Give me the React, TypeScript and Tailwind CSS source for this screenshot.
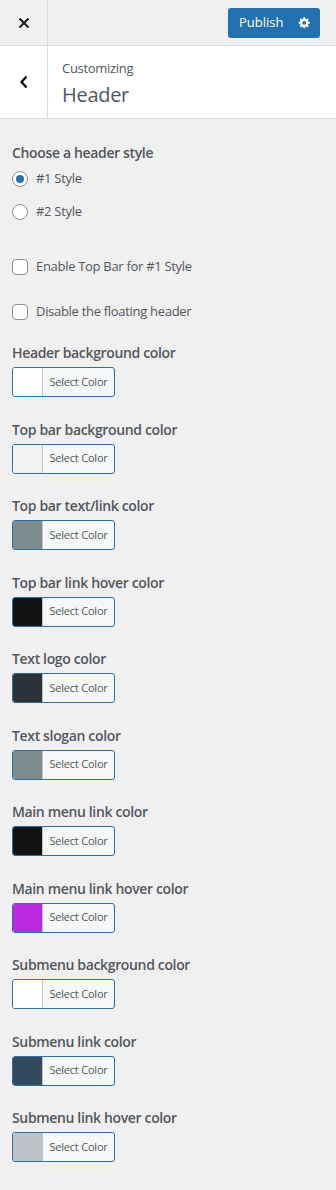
const colorFields = [
  { label: "Header background color", color: "#ffffff" },
  { label: "Top bar background color", color: "#f1f2f4" },
  { label: "Top bar text/link color", color: "#7f8c8d" },
  { label: "Top bar link hover color", color: "#131313" },
  { label: "Text logo color", color: "#2c3338" },
  { label: "Text slogan color", color: "#7f8c8d" },
  { label: "Main menu link color", color: "#131313" },
  { label: "Main menu link hover color", color: "#bb2bdd" },
  { label: "Submenu background color", color: "#ffffff" },
  { label: "Submenu link color", color: "#34495e" },
  { label: "Submenu link hover color", color: "#bdc3c7" },
];

function Radio({ checked, label }: { checked?: boolean; label: string }) {
  return (
    <label className="flex h-4 items-center gap-2">
      <span className="flex h-4 w-4 items-center justify-center rounded-full border border-[#8c8f94] bg-white">
        {checked && <span className="h-2 w-2 rounded-full bg-[#2271b1]" />}
      </span>
      <span className="text-[13px] tracking-[-0.3px] text-[#50575e]">{label}</span>
    </label>
  );
}

function Checkbox({ label }: { label: string }) {
  return (
    <label className="flex h-4 items-center gap-2">
      <span className="h-4 w-4 rounded-[4px] border border-[#8c8f94] bg-white" />
      <span className="text-[13px] tracking-[-0.3px] text-[#50575e]">{label}</span>
    </label>
  );
}

function ColorField({ label, color }: { label: string; color: string }) {
  return (
    <div className="mb-[22.5px]">
      <div className="h-5 text-[14px] font-semibold leading-5 tracking-[-0.35px] text-[#50575e]">{label}</div>
      <button className="mt-1 flex h-[30px] w-[103px] overflow-hidden rounded-[3px] border border-[#2271b1] bg-[#f6f7f7]">
        <span className="h-full w-[30px] border-r border-[#c3c4c7]" style={{ backgroundColor: color }} />
        <span className="flex-1 self-center text-center text-[11px] tracking-[-0.2px] text-[#50575e]">Select Color</span>
      </button>
    </div>
  );
}

export default function App() {
  return (
    <div className="min-h-[1190px] w-[336px] bg-[#f0f0f1] font-['Open_Sans',sans-serif]">
      {/* top bar */}
      <div className="flex h-[46px] items-center border-b border-[#dcdcde]">
        <div className="flex h-full w-[48px] items-center justify-center border-r border-[#dcdcde]">
          <svg width="12" height="12" viewBox="0 0 12 12">
            <path d="M1.5 1.5 L10.5 10.5 M10.5 1.5 L1.5 10.5" stroke="#1d2327" strokeWidth="2.2" />
          </svg>
        </div>
        <div className="flex flex-1 justify-end pr-4">
          <div className="flex h-[30px] w-[92px] items-center rounded-[3px] bg-[#2271b1] text-white">
            <span className="pl-[11px] text-[13px]">Publish</span>
            <span className="ml-auto mr-[9px] flex items-center">
              <svg width="13" height="13" viewBox="0 0 20 20" fill="#fff">
                <path d="M18 12h-2.18c-.17.7-.44 1.35-.81 1.93l1.54 1.54-2.1 2.1-1.54-1.54c-.58.36-1.23.63-1.91.79V19H8v-2.18c-.68-.16-1.33-.43-1.91-.79l-1.54 1.54-2.12-2.12 1.54-1.54c-.36-.58-.63-1.23-.79-1.91H1V9.03h2.17c.16-.7.44-1.35.8-1.94L2.43 5.55l2.1-2.1 1.54 1.54c.58-.37 1.24-.64 1.93-.81V2h3v2.18c.68.16 1.33.43 1.91.79l1.54-1.54 2.12 2.12-1.54 1.54c.36.59.64 1.24.8 1.94H18V12zm-8.5 1.5c1.66 0 3-1.34 3-3s-1.34-3-3-3-3 1.34-3 3 1.34 3 3 3z" />
              </svg>
            </span>
          </div>
        </div>
      </div>

      {/* section header */}
      <div className="flex h-[73px] border-b border-[#dcdcde] bg-white">
        <div className="flex w-[48px] items-center justify-center border-r border-[#dcdcde]">
          <svg width="8" height="14" viewBox="0 0 8 14">
            <path d="M6.5 1.5 L1.5 7 L6.5 12.5" stroke="#000" strokeWidth="2.2" fill="none" />
          </svg>
        </div>
        <div className="pl-[14px] pt-[12px]">
          <div className="text-[13px] leading-5 tracking-[-0.3px] text-[#50575e]">Customizing</div>
          <div className="mt-[3px] text-[20px] leading-7 tracking-[-0.3px] text-[#50575e]">Header</div>
        </div>
      </div>

      {/* controls */}
      <div className="px-3 pt-[24px]">
        <div className="h-5 text-[14px] font-semibold leading-5 tracking-[-0.35px] text-[#50575e]">Choose a header style</div>
        <div className="mt-2 flex flex-col gap-[17px]">
          <Radio checked label="#1 Style" />
          <Radio label="#2 Style" />
        </div>
        <div className="mt-[39px]">
          <Checkbox label="Enable Top Bar for #1 Style" />
        </div>
        <div className="mt-[29px]">
          <Checkbox label="Disable the floating header" />
        </div>
        <div className="mt-[23px]">
          {colorFields.map((f) => (
            <ColorField key={f.label} label={f.label} color={f.color} />
          ))}
        </div>
      </div>
    </div>
  );
}
